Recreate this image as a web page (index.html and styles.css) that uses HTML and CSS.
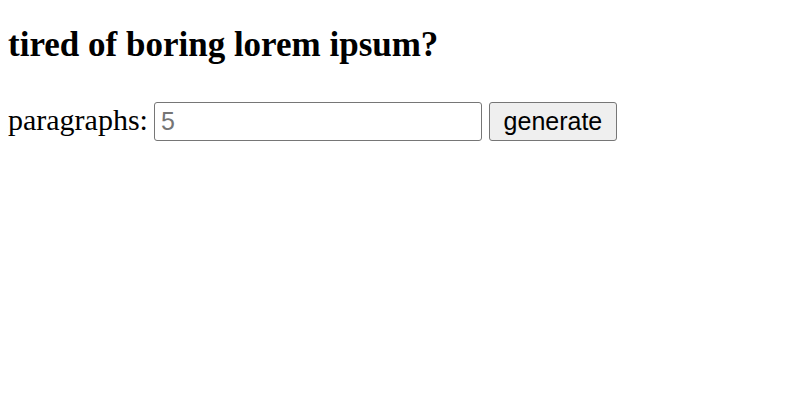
FILE: index.html
```html
<!DOCTYPE html>
<html>
<head>
<meta charset="utf-8">
<link rel="stylesheet" href="styles.css">
</head>
<body class="page">
<h1 class="title">tired of boring lorem ipsum?</h1>
<form class="form">
<label class="label" for="count">paragraphs:</label>
<input class="count" id="count" type="text" placeholder="5">
<button class="generate" type="button">generate</button>
</form>
</body>
</html>
```
FILE: styles.css
```css
.page {
  margin: 8px;
  font-family: "Liberation Serif", "Times New Roman", serif;
  font-size: 30px;
  color: #000;
  background: #fff;
}
.title {
  font-size: 35px;
  font-weight: bold;
  margin: 17px 0 0;
}
.form {
  display: flex;
  align-items: baseline;
  margin: 37px 0 0;
}
.label {
  font-size: 30px;
  margin-right: 6px;
}
.count {
  font-family: "Liberation Sans", Arial, sans-serif;
  font-size: 25px;
  width: 328px;
  height: 39px;
  padding: 1px 6px;
  border: 1px solid #767676;
  border-radius: 3px;
  box-sizing: border-box;
  margin: 0;
  color: #000;
}
.count::placeholder {
  color: #757575;
}
.generate {
  font-family: "Liberation Sans", Arial, sans-serif;
  font-size: 25px;
  height: 39px;
  width: 128px;
  padding: 1px 7px;
  margin: 0 0 0 7px;
  border: 1px solid #767676;
  border-radius: 3px;
  background: #efefef;
  color: #000;
  box-sizing: border-box;
}
```
